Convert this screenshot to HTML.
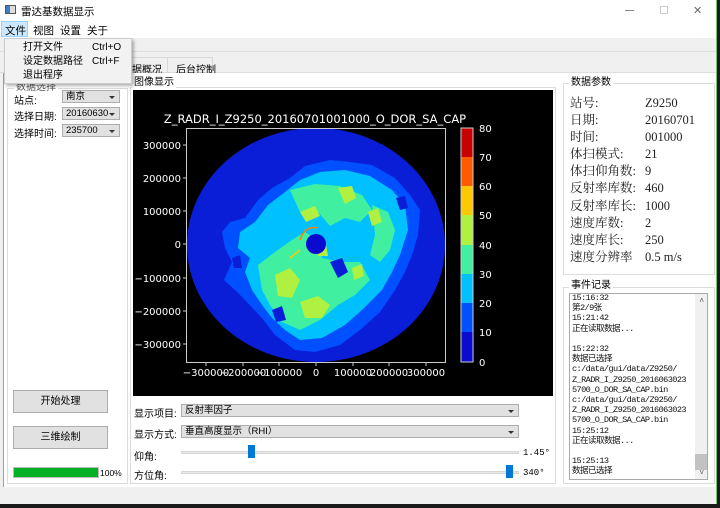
<!DOCTYPE html>
<html><head><meta charset="utf-8"><style>
*{margin:0;padding:0;box-sizing:border-box}
body{width:720px;height:508px;overflow:hidden;background:#f0f0f0;font-family:"Liberation Sans","Noto Sans CJK SC",sans-serif;font-size:10px;color:#000;position:relative}
.a{position:absolute;white-space:nowrap}
.grp{position:absolute;border:1px solid #dcdcdc;background:#fff}
.gt{position:absolute;background:#fff;padding:0 2px;font-size:10px;line-height:10px}
.combo{position:absolute;background:#e1e1e1;border:1px solid #adadad;font-size:9.5px;line-height:11px;padding-left:3px;white-space:nowrap}
.combo:after{content:"";position:absolute;right:4px;top:5px;border:3px solid transparent;border-top:3px solid #333;border-bottom:0}
.btn{position:absolute;background:#e1e1e1;border:1px solid #adadad;text-align:center;font-size:10px}
.ser{font-family:"Liberation Serif","Noto Serif CJK SC",serif;font-size:12.5px;color:#222}
.mono{font-family:"Liberation Mono","Noto Sans CJK SC",monospace;font-size:8.6px;letter-spacing:-0.6px;line-height:10.2px;color:#111;white-space:nowrap}
svg text{font-family:"DejaVu Sans",sans-serif;font-size:10px;fill:#fff}
</style></head><body>
<div class="a" style="left:0;top:0;width:716px;height:20px;background:#fff"></div>
<div class="a" style="left:5px;top:5px;width:11px;height:9px;border:1px solid #555;background:#ddd"><div style="width:4px;height:7px;background:#3a7fc4"></div></div>
<div class="a" style="left:21px;top:4px;font-size:10.5px">雷达基数据显示</div>
<div class="a" style="left:625px;top:10px;width:9px;height:1px;background:#888"></div>
<div class="a" style="left:660px;top:6px;width:8px;height:8px;border:1px solid #ccc"></div>
<div class="a" style="left:693px;top:4px;font-size:11px;color:#666">✕</div>
<div class="a" style="left:716px;top:0;width:4px;height:508px;background:#1a1a1a"></div>
<div class="a" style="left:716px;top:0;width:1px;height:508px;background:#6cc46c"></div>
<div class="a" style="left:0;top:20px;width:716px;height:18px;background:#fff"></div>
<div class="a" style="left:1px;top:21px;width:27px;height:16px;background:#cce8ff;border:1px solid #99d1ff"></div>
<div class="a" style="left:5px;top:23px;font-size:10.5px">文件</div>
<div class="a" style="left:33px;top:23px;font-size:10.5px">视图</div>
<div class="a" style="left:60px;top:23px;font-size:10.5px">设置</div>
<div class="a" style="left:87px;top:23px;font-size:10.5px">关于</div>
<div class="a" style="left:0;top:38px;width:716px;height:14px;background:#f0f0f0;border-bottom:1px solid #ddd"></div>
<div class="a" style="left:0;top:72px;width:716px;height:1px;background:#ddd"></div>
<div class="a" style="left:128px;top:57px;width:40px;height:16px;border:1px solid #d9d9d9;background:#f0f0f0;font-size:10px;padding:3px 0 0 3px">据概况</div>
<div class="a" style="left:167px;top:57px;width:46px;height:16px;border:1px solid #d9d9d9;background:#f0f0f0;font-size:10px;padding:3px 0 0 8px">后台控制</div>
<div class="a" style="left:3px;top:73px;width:713px;height:414px;background:#fff;border-left:1px solid #6cc46c"></div>
<div class="grp" style="left:7px;top:88px;width:121px;height:396px"></div>
<div class="gt" style="left:14px;top:83px;color:#555">数据选择</div>
<div class="a" style="left:14px;top:92px">站点:</div>
<div class="combo" style="left:62px;top:90px;width:58px;height:13px">南京</div>
<div class="a" style="left:14px;top:108px">选择日期:</div>
<div class="combo" style="left:62px;top:107px;width:58px;height:13px">20160630</div>
<div class="a" style="left:14px;top:125px">选择时间:</div>
<div class="combo" style="left:62px;top:124px;width:58px;height:13px">235700</div>
<div class="btn" style="left:13px;top:390px;width:95px;height:23px;line-height:21px">开始处理</div>
<div class="btn" style="left:13px;top:426px;width:95px;height:23px;line-height:21px">三维绘制</div>
<div class="a" style="left:13px;top:467px;width:86px;height:11px;background:#06b025;border:1px solid #bcbcbc"></div>
<div class="a" style="left:100px;top:468px;font-size:8.5px">100%</div>
<div class="grp" style="left:130px;top:87px;width:426px;height:397px"></div>
<div class="gt" style="left:132px;top:78px">图像显示</div>
<div class="a" style="left:133px;top:90px;width:420px;height:306px;background:#000"></div>
<svg class="a" style="left:133px;top:90px" width="420" height="306" viewBox="133 90 420 306">
<text x="315" y="123" text-anchor="middle" style="font-size:11.5px">Z_RADR_I_Z9250_20160701001000_O_DOR_SA_CAP</text>
<defs><clipPath id="c"><ellipse cx="316" cy="245" rx="129" ry="117"/></clipPath></defs>
<ellipse cx="316" cy="245" rx="129" ry="117" fill="#0a1ed8"/>
<g clip-path="url(#c)">
<path d="M222,232 L230,222 L245,218 L258,200 L272,188 L290,178 L305,166 L330,160 L350,162 L372,165 L395,178 L410,195 L420,210 L418,235 L412,255 L405,272 L395,290 L380,312 L360,330 L340,345 L315,352 L295,350 L275,335 L262,318 L245,300 L235,290 L224,280 L232,262 L225,248 Z" fill="#0050ff"/>
<path d="M240,232 L255,222 L268,205 L285,192 L300,180 L320,172 L345,170 L370,176 L392,190 L405,205 L408,230 L400,255 L392,272 L382,290 L362,310 L345,325 L322,338 L300,340 L285,330 L272,318 L262,305 L252,290 L245,272 L250,258 L238,248 Z" fill="#00c0ff"/>
<path d="M290,190 L315,184 L340,186 L362,195 L372,210 L360,222 L345,218 L330,226 L318,212 L300,212 Z" fill="#40f0a0"/>
<path d="M372,205 L388,212 L395,230 L390,250 L380,262 L370,255 L375,235 Z" fill="#40f0a0"/>
<path d="M258,265 L275,252 L292,240 L305,232 L318,240 L322,258 L340,262 L360,262 L370,280 L355,295 L338,305 L320,320 L300,330 L282,322 L270,305 L262,290 Z" fill="#40f0a0"/>
<path d="M275,275 L290,268 L300,280 L292,298 L278,296 Z M300,302 L318,296 L330,305 L322,318 L305,318 Z M338,188 L352,186 L356,198 L345,204 Z M368,212 L378,208 L382,222 L372,226 Z M300,212 L315,206 L320,216 L306,222 Z M352,268 L362,264 L364,276 L354,280 Z M318,246 L326,244 L328,256 L318,256 Z" fill="#b0f040"/>
<path d="M330,262 L342,258 L348,272 L338,278 Z M396,198 L405,196 L408,208 L400,210 Z M272,310 L282,306 L286,320 L276,322 Z M232,258 L240,255 L242,268 L234,268 Z" fill="#0a1ed8"/>
<path d="M300,240 C303,230 310,226 318,228" stroke="#ff8000" stroke-width="1.5" fill="none"/>
<path d="M290,258 L300,250" stroke="#ffc800" stroke-width="1.5"/>
</g>
<circle cx="316" cy="244" r="10" fill="#0a0ad0"/>
<rect x="186.5" y="128.5" width="259" height="234" fill="none" stroke="#ccc" stroke-width="1"/>
<g stroke="#ccc" stroke-width="1">
<line x1="183" y1="145" x2="186" y2="145"/><line x1="183" y1="178" x2="186" y2="178"/><line x1="183" y1="211" x2="186" y2="211"/><line x1="183" y1="244" x2="186" y2="244"/><line x1="183" y1="278" x2="186" y2="278"/><line x1="183" y1="311" x2="186" y2="311"/><line x1="183" y1="344" x2="186" y2="344"/>
<line x1="206" y1="363" x2="206" y2="366"/><line x1="243" y1="363" x2="243" y2="366"/><line x1="279" y1="363" x2="279" y2="366"/><line x1="316" y1="363" x2="316" y2="366"/><line x1="353" y1="363" x2="353" y2="366"/><line x1="389" y1="363" x2="389" y2="366"/><line x1="426" y1="363" x2="426" y2="366"/>
</g>
<g text-anchor="end">
<text x="181" y="149">300000</text><text x="181" y="182">200000</text><text x="181" y="215">100000</text><text x="181" y="248">0</text><text x="181" y="282">−100000</text><text x="181" y="315">−200000</text><text x="181" y="348">−300000</text>
</g>
<g text-anchor="middle">
<text x="206" y="376">−300000</text><text x="243" y="376">−200000</text><text x="279" y="376">−100000</text><text x="316" y="376">0</text><text x="353" y="376">100000</text><text x="389" y="376">200000</text><text x="426" y="376">300000</text>
</g>
<rect x="461" y="128" width="12" height="30" fill="#c80000"/>
<rect x="461" y="157" width="12" height="30" fill="#ff5a00"/>
<rect x="461" y="186" width="12" height="30" fill="#ffc800"/>
<rect x="461" y="215" width="12" height="30" fill="#b0f040"/>
<rect x="461" y="245" width="12" height="30" fill="#40f0a0"/>
<rect x="461" y="274" width="12" height="30" fill="#00c0ff"/>
<rect x="461" y="303" width="12" height="30" fill="#0050ff"/>
<rect x="461" y="332" width="12" height="30" fill="#0a0ad0"/>
<rect x="461" y="128" width="12" height="234" fill="none" stroke="#ccc"/>
<g><text x="479" y="132">80</text><text x="479" y="161">70</text><text x="479" y="190">60</text><text x="479" y="219">50</text><text x="479" y="249">40</text><text x="479" y="278">30</text><text x="479" y="307">20</text><text x="479" y="336">10</text><text x="479" y="366">0</text></g>
</svg>
<div class="a" style="left:134px;top:405px">显示项目:</div>
<div class="combo" style="left:181px;top:404px;width:338px;height:13px">反射率因子</div>
<div class="a" style="left:134px;top:426px">显示方式:</div>
<div class="combo" style="left:181px;top:425px;width:338px;height:13px">垂直高度显示（RHI）</div>
<div class="a" style="left:134px;top:448px">仰角:</div>
<div class="a" style="left:181px;top:451px;width:338px;height:3px;background:#e7e7e7;border:1px solid #d6d6d6"></div>
<div class="a" style="left:248px;top:445px;width:7px;height:13px;background:#0078d7"></div>
<div class="a" style="left:523px;top:448px;font-size:9px;font-family:'Liberation Mono',monospace">1.45°</div>
<div class="a" style="left:134px;top:467px">方位角:</div>
<div class="a" style="left:181px;top:471px;width:338px;height:3px;background:#e7e7e7;border:1px solid #d6d6d6"></div>
<div class="a" style="left:506px;top:465px;width:7px;height:13px;background:#0078d7"></div>
<div class="a" style="left:523px;top:468px;font-size:9px;font-family:'Liberation Mono',monospace">340°</div>
<div class="grp" style="left:563px;top:83px;width:152px;height:192px"></div>
<div class="gt" style="left:569px;top:78px">数据参数</div>
<div class="a ser" style="left:570px;top:95px;line-height:17.1px">站号:<br>日期:<br>时间:<br>体扫模式:<br>体扫仰角数:<br>反射率库数:<br>反射率库长:<br>速度库数:<br>速度库长:<br>速度分辨率</div>
<div class="a ser" style="left:645px;top:95px;line-height:17.1px">Z9250<br>20160701<br>001000<br>21<br>9<br>460<br>1000<br>2<br>250<br>0.5 m/s</div>
<div class="grp" style="left:563px;top:287px;width:152px;height:197px"></div>
<div class="gt" style="left:569px;top:281px">事件记录</div>
<div class="a" style="left:569px;top:293px;width:139px;height:187px;border:1px solid #aaa;background:#fff;overflow:hidden">
<div class="mono" style="padding:0 0 0 2px;margin-top:-1px">15:16:32<br>第2/9张<br>15:21:42<br>正在读取数据...<br><br>15:22:32<br>数据已选择<br>c:/data/gui/data/Z9250/<br>Z_RADR_I_Z9250_2016063023<br>5700_O_DOR_SA_CAP.bin<br>c:/data/gui/data/Z9250/<br>Z_RADR_I_Z9250_2016063023<br>5700_O_DOR_SA_CAP.bin<br>15:25:12<br>正在读取数据...<br><br>15:25:13<br>数据已选择</div>
<div class="a" style="right:0;top:0;width:12px;height:185px;background:#f0f0f0"></div>
<div class="a" style="right:0;top:160px;width:12px;height:16px;background:#c2c2c2"></div>
<div class="a" style="right:3px;top:2px;font-size:8px;color:#555">˄</div>
<div class="a" style="right:3px;top:174px;font-size:8px;color:#555">˅</div>
</div>
<div class="a" style="left:0;top:504px;width:720px;height:4px;background:#1a1a1a"></div>
<div class="a" style="left:4px;top:38px;width:128px;height:46px;background:#f2f2f2;border:1px solid #ccc;box-shadow:2px 2px 3px rgba(0,0,0,0.3)"></div>
<div class="a" style="left:23px;top:41px;font-size:10px;line-height:14px">打开文件<br>设定数据路径<br>退出程序</div>
<div class="a" style="left:92px;top:41px;font-size:10px;line-height:14px">Ctrl+O<br>Ctrl+F</div>
</body></html>
